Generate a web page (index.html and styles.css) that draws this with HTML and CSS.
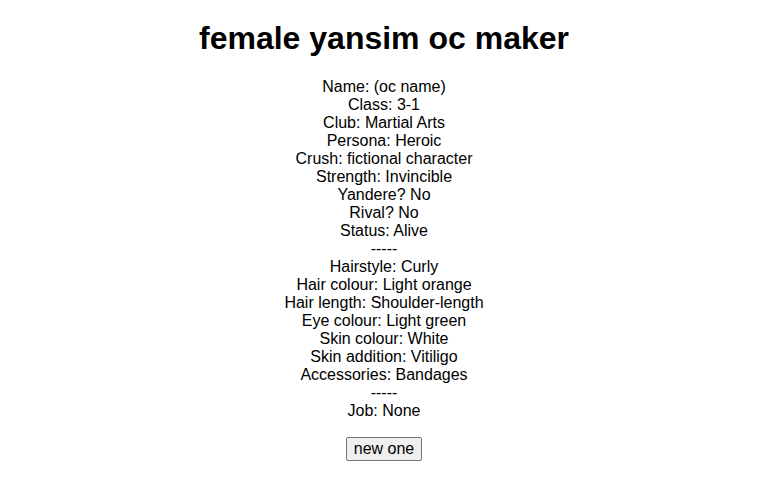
FILE: index.html
```html
<!DOCTYPE html>
<html>
<head>
<meta charset="utf-8">
<link rel="stylesheet" href="styles.css">
</head>
<body>
<h1 class="title">female yansim oc maker</h1>
<div class="info">
<div>Name: (oc name)</div>
<div>Class: 3-1</div>
<div>Club: Martial Arts</div>
<div>Persona: Heroic</div>
<div>Crush: fictional character</div>
<div>Strength: Invincible</div>
<div>Yandere? No</div>
<div>Rival? No</div>
<div>Status: Alive</div>
<div>-----</div>
<div>Hairstyle: Curly</div>
<div>Hair colour: Light orange</div>
<div>Hair length: Shoulder-length</div>
<div>Eye colour: Light green</div>
<div>Skin colour: White</div>
<div>Skin addition: Vitiligo</div>
<div>Accessories: Bandages</div>
<div>-----</div>
<div>Job: None</div>
</div>
<div class="actions"><button class="btn">new one</button></div>
</body>
</html>
```
FILE: styles.css
```css
body {
  margin: 8px;
  font-family: "Liberation Sans", Arial, sans-serif;
  text-align: center;
  color: #000;
  background: #fff;
}
.title {
  font-size: 32px;
  font-weight: bold;
  margin: 12px 0 21px;
  line-height: 37px;
}
.info {
  font-size: 16px;
  line-height: 18px;
}
.actions {
  margin-top: 17px;
}
.btn {
  font-family: "Liberation Sans", Arial, sans-serif;
  font-size: 16px;
  line-height: 18px;
  padding: 2px 7px;
  border: 1px solid #767676;
  border-radius: 2px;
  background: #efefef;
  color: #000;
}
```
